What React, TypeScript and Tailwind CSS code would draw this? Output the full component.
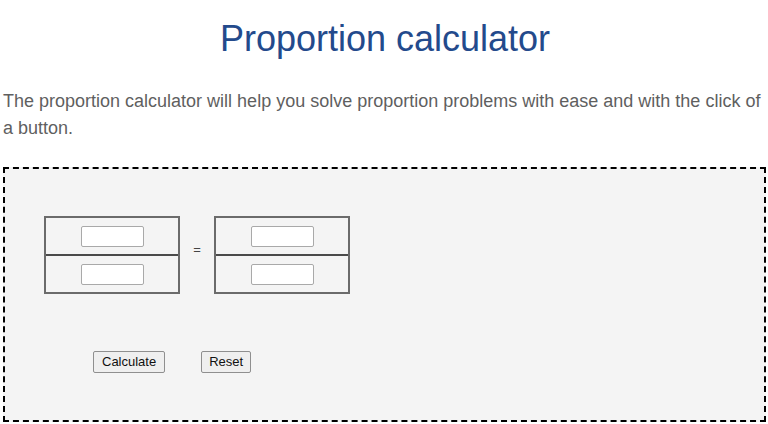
import React from "react";

function Fraction() {
  return (
    <div className="flex flex-col w-[136px] border-2 border-[#6b6b6b] bg-[#f4f4f4]">
      <div className="h-[38px] flex items-center justify-center border-b-2 border-[#4a4a4a]">
        <input className="w-[63px] h-[21px] bg-white border border-[#a9a9a9] rounded-[2px]" />
      </div>
      <div className="h-[36px] flex items-center justify-center">
        <input className="w-[63px] h-[21px] bg-white border border-[#a9a9a9] rounded-[2px]" />
      </div>
    </div>
  );
}

export default function App() {
  return (
    <div className="w-[768px] h-[424px] bg-white overflow-hidden" style={{ fontFamily: '"Liberation Sans", Arial, sans-serif' }}>
      <h1 className="text-[36px] leading-[40px] text-[#234a8c] text-center pt-[19px] pl-[2px]">Proportion calculator</h1>
      <p className="text-[18px] leading-[27px] text-[#5f5f5f] mt-[29px] pl-[3px] pr-[2px]">
        The proportion calculator will help you solve proportion problems with ease and with the click of a button.
      </p>
      <div className="mt-[25px] ml-[3px] w-[763px] h-[255px] border-2 border-dashed border-black bg-[#f4f4f4] pl-[39px] pt-[47px]">
        <div className="flex items-center">
          <Fraction />
          <div className="w-[34px] text-center text-[13px] text-[#444] mb-[10px]">=</div>
          <Fraction />
        </div>
        <div className="flex mt-[57px] pl-[49px] gap-[36px]">
          <button className="h-[22px] px-[8px] text-[13px] text-[#111] bg-[#efefef] border border-[#8f8f8f] rounded-[2px]">Calculate</button>
          <button className="h-[22px] px-[7px] text-[13px] text-[#111] bg-[#efefef] border border-[#8f8f8f] rounded-[2px]">Reset</button>
        </div>
      </div>
    </div>
  );
}
